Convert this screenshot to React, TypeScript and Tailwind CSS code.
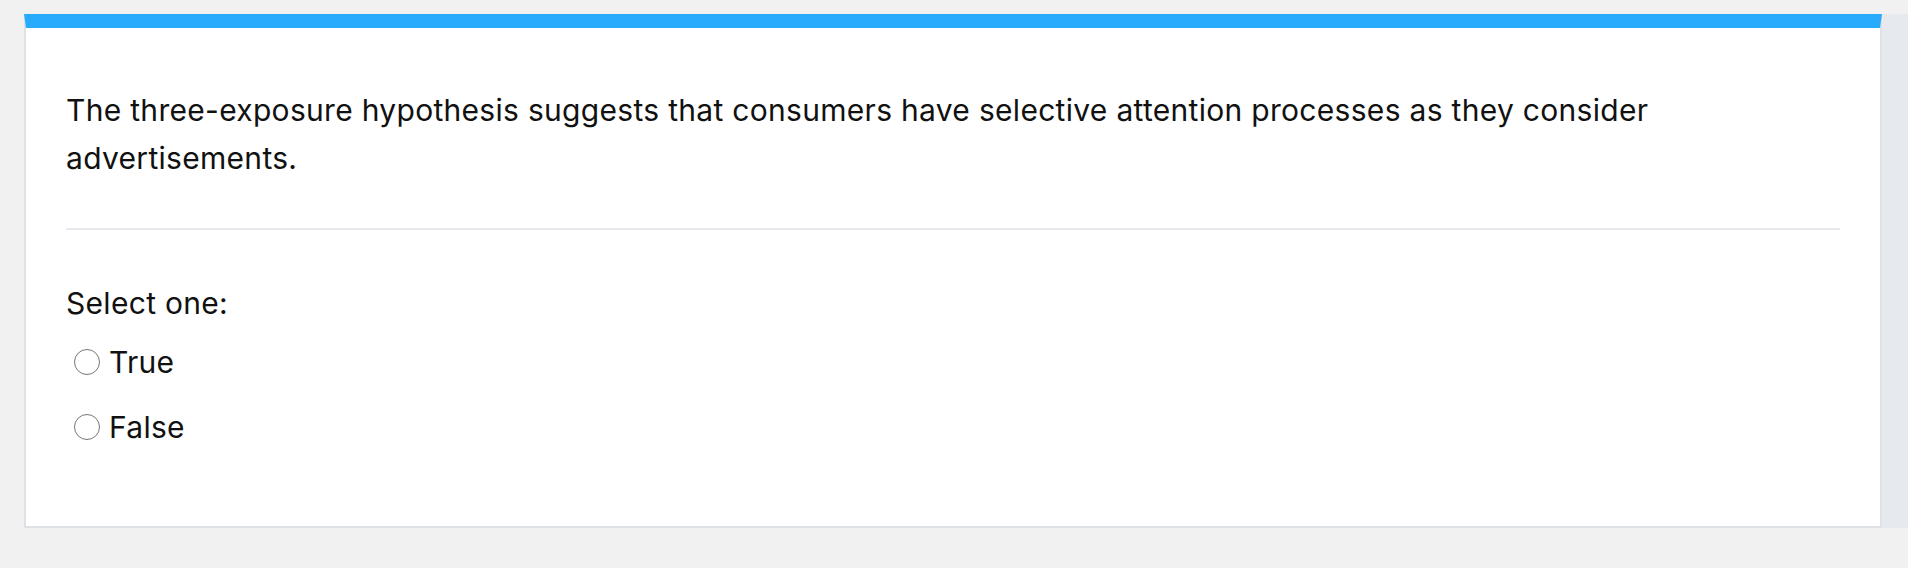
import React from "react";

export default function App() {
  const font = { fontFamily: "Inter, 'Noto Sans', sans-serif" };
  return (
    <div className="w-[1908px] h-[568px] bg-[#f1f1f1] pt-[14px]" style={font}>
      <div className="flex h-[514px] pl-[24px]">
        <div className="flex-1 bg-white border-2 border-t-[14px] border-[#dee2e6] border-t-[#29abfd] px-[40px] text-[#111111] text-[30px] tracking-[0.3px]">
          <div className="pt-[58px] leading-[48px] pr-[150px]">
            The three-exposure hypothesis suggests that consumers have selective attention processes as they consider advertisements.
          </div>
          <div className="mt-[46px] h-[2px] bg-[#e6eaee]" />
          <div className="mt-[49px] leading-[48px]">Select one:</div>
          <div className="flex flex-col">
            <label className="flex items-center h-[48px] mt-[11px] pl-[8px] leading-[48px]">
              <span className="w-[26px] h-[26px] rounded-full border-[1.5px] border-[#767676] mr-[9px] shrink-0" />
              True
            </label>
            <label className="flex items-center h-[48px] mt-[17px] pl-[8px] leading-[48px]">
              <span className="w-[26px] h-[26px] rounded-full border-[1.5px] border-[#767676] mr-[9px] shrink-0" />
              False
            </label>
          </div>
        </div>
        <div className="w-[26px] bg-[#e6eaee]" />
      </div>
    </div>
  );
}
